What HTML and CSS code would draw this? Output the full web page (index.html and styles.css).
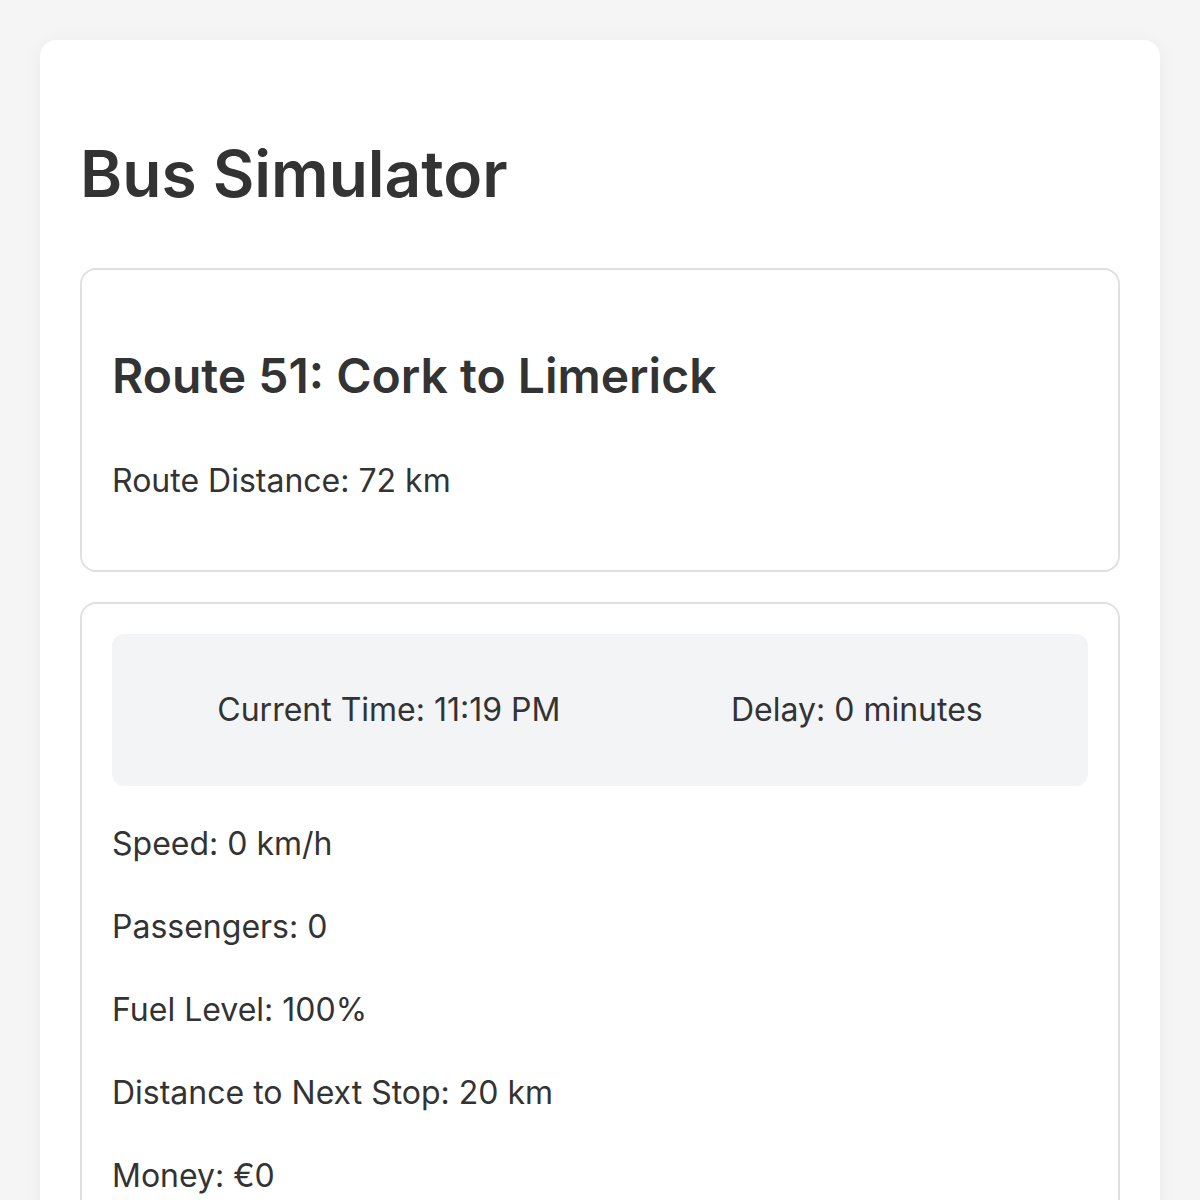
FILE: index.html
```html
<!DOCTYPE html>
<html lang="en">
<head>
    <meta charset="UTF-8">
    <meta name="viewport" content="width=device-width, initial-scale=1.0">
    <title>Bus Simulator</title>
    <link rel="stylesheet" href="styles.css">
</head>
<body>
    <div class="container">
        <h1>Bus Simulator</h1>

        <div class="panel route-info">
            <h2>Route 51: Cork to Limerick</h2>
            <p>Route Distance: 72 km</p>
        </div>

        <div class="panel bus-status">
            <div class="status-bar">
                <p>Current Time: 11:19 PM</p>
                <p>Delay: 0 minutes</p>
            </div>
            <p>Speed: 0 km/h</p>
            <p>Passengers: 0</p>
            <p>Fuel Level: 100%</p>
            <p>Distance to Next Stop: 20 km</p>
            <p>Money: €0</p>
        </div>
    </div>
</body>
</html>
```

FILE: styles.css
```css
body {
    margin: 0;
    padding: 40px;
    font-family: 'Inter', 'Liberation Sans', sans-serif;
    font-size: 32px;
    line-height: 1.6;
    color: #333;
    background-color: #f5f5f5;
}

.container {
    background: #fff;
    padding: 40px;
    border-radius: 16px;
    box-shadow: 0 4px 20px rgba(0, 0, 0, 0.05);
}

h1 {
    font-size: 64px;
    font-weight: 600;
    margin: 43px 0;
}

h2 {
    font-size: 48px;
    font-weight: 600;
    margin: 38px 0 40px;
}

p {
    margin: 32px 0;
}

.panel {
    border: 2px solid #e0e0e0;
    border-radius: 16px;
    padding: 30px 30px 32px;
    margin-bottom: 30px;
}

.status-bar {
    display: flex;
    justify-content: space-around;
    background-color: #f3f4f6;
    border-radius: 12px;
    padding: 18px 20px;
}
```
